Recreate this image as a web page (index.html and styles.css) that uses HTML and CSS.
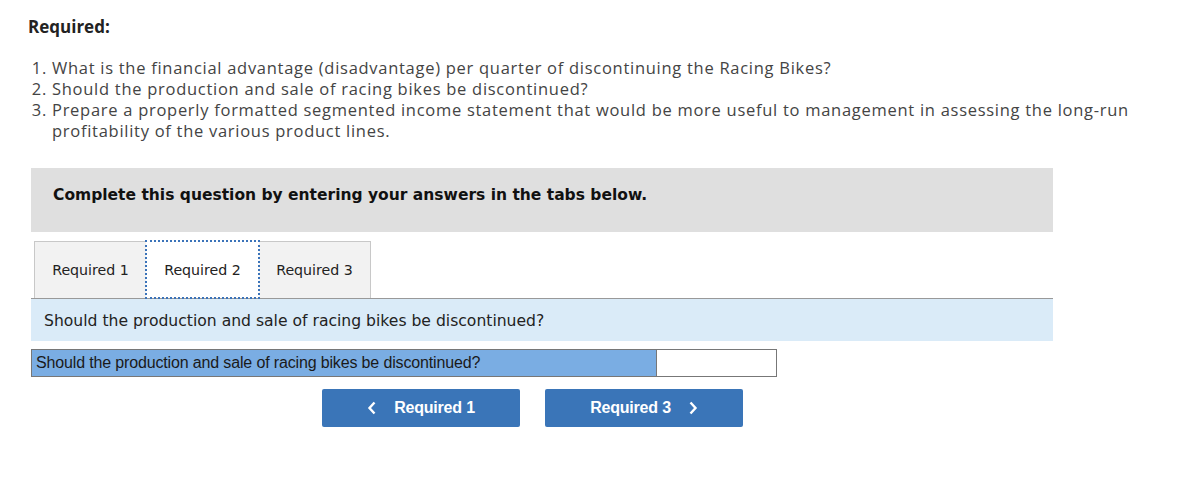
FILE: index.html
```html
<!DOCTYPE html>
<html lang="en">
<head>
    <meta charset="UTF-8">
    <title>Required</title>
    <link rel="stylesheet" href="styles.css">
</head>
<body>

<div class="page">
    <h3 class="req-title">Required:</h3>
    <ol class="req-list">
        <li>What is the financial advantage (disadvantage) per quarter of discontinuing the Racing Bikes?</li>
        <li>Should the production and sale of racing bikes be discontinued?</li>
        <li>Prepare a properly formatted segmented income statement that would be more useful to management in assessing the long-run profitability of the various product lines.</li>
    </ol>

    <div class="panel">
        <div class="notice">Complete this question by entering your answers in the tabs below.</div>

        <div class="tabs">
            <div class="tab">Required 1</div>
            <div class="tab active">Required 2</div>
            <div class="tab">Required 3</div>
        </div>

        <div class="question">Should the production and sale of racing bikes be discontinued?</div>

        <table class="answer">
            <tr>
                <td class="label">Should the production and sale of racing bikes be discontinued?</td>
                <td class="input"></td>
            </tr>
        </table>

        <div class="nav">
            <button class="nav-btn">
                <svg class="chev" width="10" height="14" viewBox="0 0 10 14"><polyline points="7.5,1.5 2.5,7 7.5,12.5" fill="none" stroke="#fff" stroke-width="2.4"/></svg>
                Required 1
            </button>
            <button class="nav-btn">
                Required 3
                <svg class="chev right" width="10" height="14" viewBox="0 0 10 14"><polyline points="2.5,1.5 7.5,7 2.5,12.5" fill="none" stroke="#fff" stroke-width="2.4"/></svg>
            </button>
        </div>
    </div>
</div>

</body>
</html>
```

FILE: styles.css
```css
body {
    margin: 0;
    background: #fff;
    font-family: "Open Sans", Lato, sans-serif;
    color: #444;
}
.page {
    padding: 17px 0 0 28px;
}
.req-title {
    margin: 0;
    font-size: 17px;
    font-weight: bold;
    color: #222;
    line-height: 20px;
}
.req-list {
    margin: 20px 0 0 0;
    padding-left: 24px;
    width: 1100px;
    font-size: 16.5px;
    letter-spacing: 0.72px;
    line-height: 21px;
}
.panel {
    margin: 27px 0 0 3px;
    width: 1022px;
}
.notice {
    background: #dfdfdf;
    height: 64px;
    line-height: 54px;
    padding-left: 22px;
    font-family: "DejaVu Sans", Verdana, sans-serif;
    font-weight: bold;
    font-size: 15.5px;
    color: #111;
}
.tabs {
    display: flex;
    margin-top: 9px;
    padding-left: 3px;
    border-bottom: 1px solid #999;
}
.tab {
    width: 111px;
    height: 56px;
    line-height: 56px;
    text-align: center;
    background: #f2f2f2;
    border: 1px solid #c8c8c8;
    border-bottom: none;
    font-family: "DejaVu Sans", Verdana, sans-serif;
    font-size: 14.2px;
    color: #222;
    margin-right: -1px;
}
.tab.active {
    background: #fff;
    border-color: transparent;
    outline: 2px dotted #3b73b9;
    outline-offset: -1px;
    position: relative;
}
.question {
    background: #daebf8;
    height: 42px;
    line-height: 44px;
    padding-left: 13px;
    font-family: "DejaVu Sans", Verdana, sans-serif;
    font-size: 15.6px;
    color: #222;
}
.answer {
    margin-top: 8px;
    width: 746px;
    border-collapse: collapse;
}
.answer td {
    border: 1px solid #777;
    height: 26px;
    padding: 0;
}
.label {
    background: #7aade3;
    padding-left: 4px !important;
    font-family: "Liberation Sans", Arial, sans-serif;
    font-size: 16px;
    letter-spacing: -0.15px;
    color: #1a1a1a;
}
.input {
    width: 119px;
    background: #fff;
}
.nav {
    display: flex;
    gap: 25px;
    margin-top: 12px;
    padding-left: 291px;
}
.nav-btn {
    display: flex;
    align-items: center;
    justify-content: center;
    width: 198px;
    height: 38px;
    background: #3a75b8;
    border: none;
    border-radius: 2px;
    color: #fff;
    font-family: "Liberation Sans", Arial, sans-serif;
    font-weight: bold;
    font-size: 16px;
    letter-spacing: -0.2px;
    cursor: pointer;
}
.chev {
    margin-right: 17px;
}
.chev.right {
    margin: 0 0 0 17px;
}
```
